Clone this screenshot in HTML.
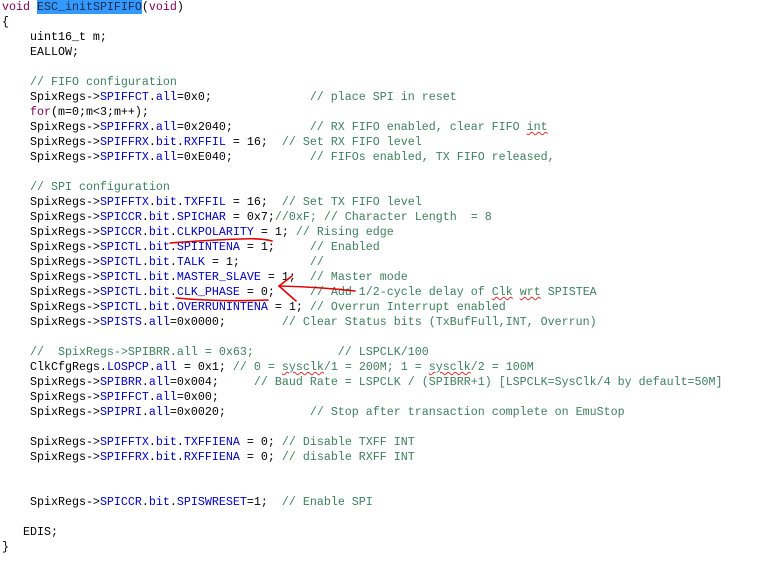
<!DOCTYPE html>
<html><head><meta charset="utf-8"><style>
html,body{margin:0;padding:0;background:#fff;width:764px;height:561px;overflow:hidden}
pre{margin:0;position:absolute;left:2px;top:0;font-family:"Liberation Mono",monospace;font-size:11.67px;line-height:15px;color:#000}
.k{color:#7f0055}.f{color:#0000c0}.c{color:#3f7f5f}
.h{background:#3399ff;color:#1a2a50}
.s{text-decoration:underline wavy #e03030;text-decoration-thickness:1px}
svg{position:absolute;left:0;top:0}
</style></head><body>
<pre><span class="k">void</span> <span class="h">ESC_initSPIFIFO</span>(<span class="k">void</span>)
{
    uint16_t m;
    EALLOW;

    <span class="c">// FIFO configuration</span>
    SpixRegs-&gt;<span class="f">SPIFFCT</span>.<span class="f">all</span>=0x0;              <span class="c">// place SPI in reset</span>
    <span class="k">for</span>(m=0;m&lt;3;m++);
    SpixRegs-&gt;<span class="f">SPIFFRX</span>.<span class="f">all</span>=0x2040;           <span class="c">// RX FIFO enabled, clear FIFO <span class="s">int</span></span>
    SpixRegs-&gt;<span class="f">SPIFFRX</span>.<span class="f">bit</span>.<span class="f">RXFFIL</span> = 16;  <span class="c">// Set RX FIFO level</span>
    SpixRegs-&gt;<span class="f">SPIFFTX</span>.<span class="f">all</span>=0xE040;           <span class="c">// FIFOs enabled, TX FIFO released,</span>

    <span class="c">// SPI configuration</span>
    SpixRegs-&gt;<span class="f">SPIFFTX</span>.<span class="f">bit</span>.<span class="f">TXFFIL</span> = 16;  <span class="c">// Set TX FIFO level</span>
    SpixRegs-&gt;<span class="f">SPICCR</span>.<span class="f">bit</span>.<span class="f">SPICHAR</span> = 0x7;<span class="c">//0xF; // Character Length  = 8</span>
    SpixRegs-&gt;<span class="f">SPICCR</span>.<span class="f">bit</span>.<span class="f">CLKPOLARITY</span> = 1; <span class="c">// Rising edge</span>
    SpixRegs-&gt;<span class="f">SPICTL</span>.<span class="f">bit</span>.<span class="f">SPIINTENA</span> = 1;     <span class="c">// Enabled</span>
    SpixRegs-&gt;<span class="f">SPICTL</span>.<span class="f">bit</span>.<span class="f">TALK</span> = 1;          <span class="c">//</span>
    SpixRegs-&gt;<span class="f">SPICTL</span>.<span class="f">bit</span>.<span class="f">MASTER_SLAVE</span> = 1;  <span class="c">// Master mode</span>
    SpixRegs-&gt;<span class="f">SPICTL</span>.<span class="f">bit</span>.<span class="f">CLK_PHASE</span> = 0;     <span class="c">// Add 1/2-cycle delay of <span class="s">Clk</span> <span class="s">wrt</span> SPISTEA</span>
    SpixRegs-&gt;<span class="f">SPICTL</span>.<span class="f">bit</span>.<span class="f">OVERRUNINTENA</span> = 1; <span class="c">// Overrun Interrupt enabled</span>
    SpixRegs-&gt;<span class="f">SPISTS</span>.<span class="f">all</span>=0x0000;        <span class="c">// Clear Status bits (TxBufFull,INT, Overrun)</span>

    <span class="c">//  SpixRegs-&gt;SPIBRR.all = 0x63;            // LSPCLK/100</span>
    ClkCfgRegs.<span class="f">LOSPCP</span>.<span class="f">all</span> = 0x1; <span class="c">// 0 = <span class="s">sysclk</span>/1 = 200M; 1 = <span class="s">sysclk</span>/2 = 100M</span>
    SpixRegs-&gt;<span class="f">SPIBRR</span>.<span class="f">all</span>=0x004;     <span class="c">// Baud Rate = LSPCLK / (SPIBRR+1) [LSPCLK=SysClk/4 by default=50M]</span>
    SpixRegs-&gt;<span class="f">SPIFFCT</span>.<span class="f">all</span>=0x00;
    SpixRegs-&gt;<span class="f">SPIPRI</span>.<span class="f">all</span>=0x0020;            <span class="c">// Stop after transaction complete on EmuStop</span>

    SpixRegs-&gt;<span class="f">SPIFFTX</span>.<span class="f">bit</span>.<span class="f">TXFFIENA</span> = 0; <span class="c">// Disable TXFF INT</span>
    SpixRegs-&gt;<span class="f">SPIFFRX</span>.<span class="f">bit</span>.<span class="f">RXFFIENA</span> = 0; <span class="c">// disable RXFF INT</span>


    SpixRegs-&gt;<span class="f">SPICCR</span>.<span class="f">bit</span>.<span class="f">SPISWRESET</span>=1;  <span class="c">// Enable SPI</span>

   EDIS;
}</pre>
<svg width="764" height="561" fill="none" stroke="#e00000" stroke-width="1.6" stroke-linecap="round">
<path d="M170 243 Q210 240 240 239 Q262 238 272 241"/>
<path d="M176 298 Q220 302 268 300"/>
<path d="M355 291 Q320 287 279 286"/>
<path d="M279 286 L292 276"/>
<path d="M279 286 Q288 294 296 301"/>
</svg>
</body></html>
